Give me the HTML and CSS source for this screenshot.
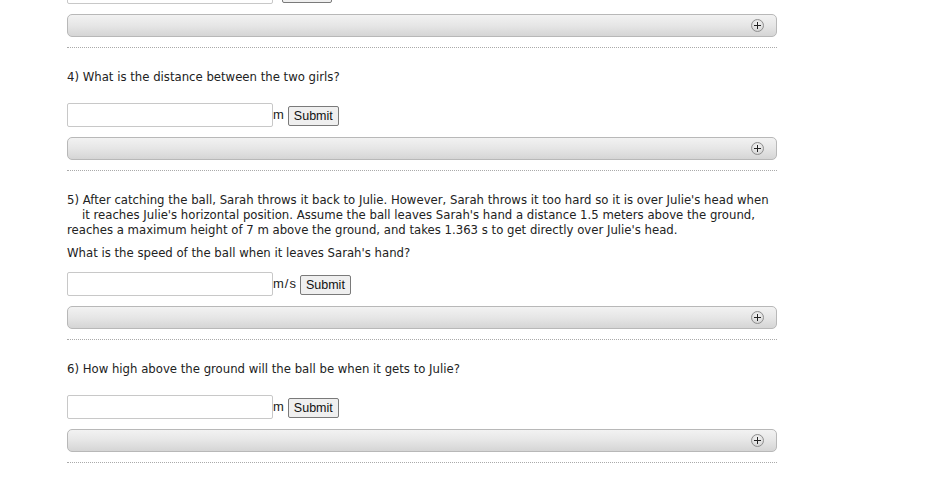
FILE: index.html
```html
<!DOCTYPE html>
<html>
<head>
<meta charset="utf-8">
<link rel="stylesheet" href="styles.css">
</head>
<body>
<div class="page">
  <div class="part part-first">
    <div class="answer">
      <input class="field" type="text"><span class="unit unit-short">s</span><button class="submit">Submit</button>
    </div>
    <div class="bar"><span class="toggle"></span></div>
  </div>

  <div class="part">
    <p class="q">4) What is the distance between the two girls?</p>
    <div class="answer">
      <input class="field" type="text"><span class="unit">m</span><button class="submit">Submit</button>
    </div>
    <div class="bar"><span class="toggle"></span></div>
  </div>

  <div class="part">
    <p class="intro"><span class="line">5) After catching the ball, Sarah throws it back to Julie. However, Sarah throws it too hard so it is over Julie's head when</span><span class="line indent">it reaches Julie's horizontal position. Assume the ball leaves Sarah's hand a distance 1.5 meters above the ground,</span><span class="line">reaches a maximum height of 7 m above the ground, and takes 1.363 s to get directly over Julie's head.</span></p>
    <p class="q q-short">What is the speed of the ball when it leaves Sarah's hand?</p>
    <div class="answer">
      <input class="field" type="text"><span class="unit unit-spaced">m/s</span><button class="submit">Submit</button>
    </div>
    <div class="bar"><span class="toggle"></span></div>
  </div>

  <div class="part">
    <p class="q">6) How high above the ground will the ball be when it gets to Julie?</p>
    <div class="answer">
      <input class="field" type="text"><span class="unit">m</span><button class="submit">Submit</button>
    </div>
    <div class="bar"><span class="toggle"></span></div>
  </div>
</div>
</body>
</html>
```

FILE: styles.css
```css
html, body {
  margin: 0;
  padding: 0;
  background: #ffffff;
}

.page {
  margin-left: 67px;
  width: 710px;
  font-family: "DejaVu Sans Condensed", "DejaVu Sans", sans-serif;
  font-size: 13px;
  color: #222;
}

.part {
  padding-bottom: 10px;
  border-bottom: 1px dotted #aaa;
  padding-top: 21px;
}

.part-first {
  padding-top: 0;
  margin-top: -20px;
}

.q, .intro {
  margin: 0 0 19px;
  line-height: 15px;
}

.intro {
  margin-bottom: 8px;
}

.q-short {
  margin-bottom: 12px;
}

.line {
  display: block;
  white-space: nowrap;
}

.line.indent {
  padding-left: 15px;
}

.answer {
  display: flex;
  align-items: center;
  height: 24px;
  margin-bottom: 10px;
  font-family: "Liberation Sans", Arial, sans-serif;
  font-size: 13px;
  color: #222;
}

.field {
  box-sizing: border-box;
  width: 206px;
  height: 24px;
  margin: 0;
  border: 1px solid #c8c8c8;
  border-radius: 2px;
  background: #fff;
  padding: 0 4px;
}

.unit {
  line-height: 24px;
  margin-right: 4px;
}

.unit-short {
  margin-right: 2px;
}

.unit-spaced {
  letter-spacing: 1px;
  margin-right: 3px;
}

.submit {
  box-sizing: border-box;
  height: 20px;
  margin: 1px 0 0 0;
  padding: 0 5px;
  font-family: "Liberation Sans", Arial, sans-serif;
  font-size: 12.5px;
  color: #111;
  background: #efefef;
  border: 1px solid #7a7a7a;
  border-radius: 2px;
}

.bar {
  box-sizing: border-box;
  height: 23px;
  border: 1px solid #b8b8b8;
  border-radius: 5px;
  background: linear-gradient(to bottom, #f2f2f2 0%, #e6e6e6 50%, #d5d5d5 100%);
  display: flex;
  align-items: center;
  justify-content: flex-end;
  padding-right: 12px;
}

.toggle {
  position: relative;
  box-sizing: border-box;
  width: 13px;
  height: 13px;
  border-radius: 50%;
  border: 1px solid #8f8f8f;
  background: radial-gradient(circle at 50% 35%, #f6f6f6 0%, #dedede 60%, #c8c8c8 100%);
}

.toggle::before,
.toggle::after {
  content: "";
  position: absolute;
  background: #222;
}

.toggle::before {
  left: 2px;
  right: 2px;
  top: 5px;
  height: 1px;
}

.toggle::after {
  top: 2px;
  bottom: 2px;
  left: 5px;
  width: 1px;
}
```
